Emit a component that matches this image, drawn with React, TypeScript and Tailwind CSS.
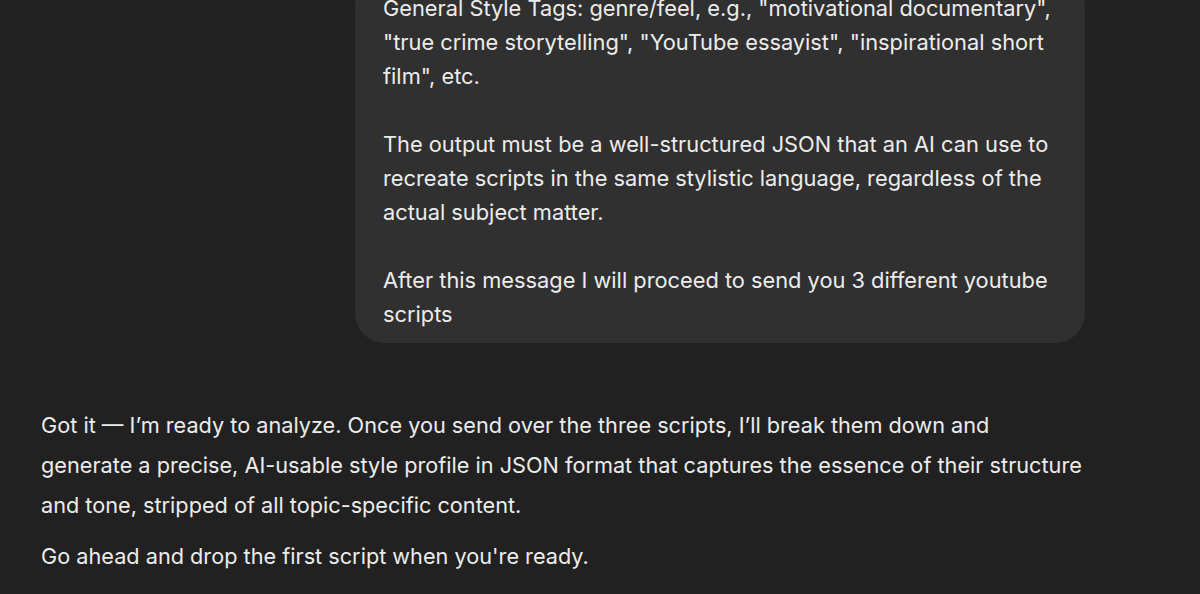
export default function App() {
  return (
    <div
      className="w-[1200px] h-[594px] overflow-hidden bg-[#212121] text-[#ececec]"
      style={{ fontFamily: "Inter, 'Noto Sans', sans-serif" }}
    >
      <div className="pl-[41px] pr-[115px] mt-[-23px]">
        {/* user bubble */}
        <div className="flex justify-end">
          <div className="w-[730px] rounded-[30px] bg-[#303030] pl-[28px] pr-[30px] pt-[14px] pb-[12px] text-[21.8px] leading-[34px]">
            <p>
              General Style Tags: genre/feel, e.g., "motivational documentary", "true crime storytelling",
              "YouTube essayist", "inspirational short film", etc.
            </p>
            <p className="mt-[34px]">
              The output must be a well-structured JSON that an AI can use to recreate scripts in the same
              stylistic language, regardless of the actual subject matter.
            </p>
            <p className="mt-[34px]">
              After this message I will proceed to send you 3 different youtube scripts
            </p>
          </div>
        </div>

        {/* assistant reply */}
        <div className="mt-[62px] w-[1044px] text-[21.7px] leading-[40px]">
          <p>
            Got it — I’m ready to analyze. Once you send over the three scripts, I’ll break them down and
            <br />
            generate a precise, AI-usable style profile in JSON format that captures the essence of their
            structure and tone, stripped of all topic-specific content.
          </p>
          <p className="mt-[11px]">Go ahead and drop the first script when you're ready.</p>
        </div>
      </div>
    </div>
  );
}
